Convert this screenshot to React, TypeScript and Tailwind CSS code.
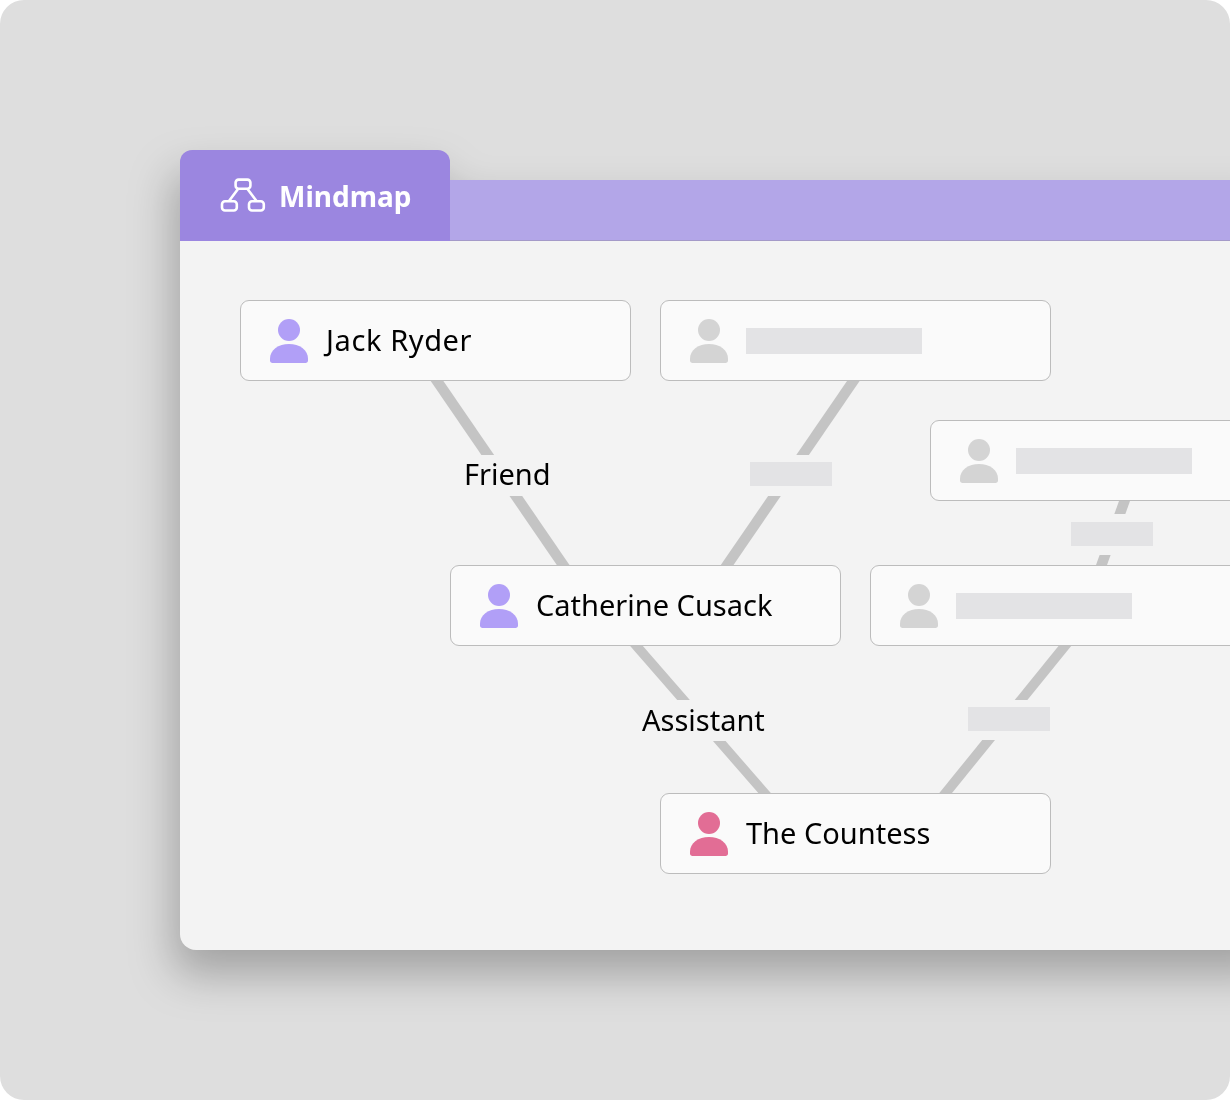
import React from 'react';

const Avatar = ({ className }: { className: string }) => (
  <svg viewBox="0 0 38 44" className={`w-[38px] h-[44px] shrink-0 ${className}`} fill="currentColor">
    <circle cx="19" cy="11" r="11" />
    <path d="M0 39.500C0 31 8.500 25 19 25C29.500 25 38 31 38 39.500V41.500C38 43 37 44 35.500 44H2.500C1 44 0 43 0 41.500Z" />
  </svg>
);

const Node = ({ pos, label, avatar, labelClass = '' }: { pos: string; label?: string; avatar: string; labelClass?: string }) => (
  <div className={`absolute ${pos} w-[391px] h-[81px] flex items-center gap-[18px] pl-[29px] bg-[#fafafa] border border-[#bcbcbc] rounded-[9px]`}>
    <Avatar className={avatar} />
    {label ? (
      <span className={`text-[29px] leading-none pb-[3px] text-black whitespace-nowrap ${labelClass}`}>{label}</span>
    ) : (
      <div className="w-[176px] h-[26px] bg-[#e3e3e5]" />
    )}
  </div>
);

const Tag = ({ pos }: { pos: string }) => (
  <div className={`absolute ${pos} w-[82px] h-[24px] bg-[#e3e3e5]`} />
);

const Relation = ({ pos, label }: { pos: string; label: string }) => (
  <span className={`absolute ${pos} text-[29px] leading-none text-black whitespace-nowrap`}>{label}</span>
);

export default function App() {
  return (
    <div className="w-[1230px] h-[1100px] overflow-hidden bg-white font-['Noto_Sans','Open_Sans',sans-serif]">
      <div className="w-full h-full overflow-hidden rounded-[24px] bg-[#dedede] pl-[180px] pt-[150px]">
        <div className="w-[1100px] drop-shadow-[-6px_24px_22px_rgba(0,0,0,0.27)]">
          <div className="flex items-end h-[91px]">
            <div className="w-[270px] h-[91px] flex items-center gap-[13px] pl-[40px] pb-[1px] bg-[#9b86e0] rounded-t-[12px]">
              <svg viewBox="220 177 46 36" className="w-[46px] h-[36px]" fill="none" stroke="white" strokeWidth="2.600">
                <rect x="235.600" y="179.600" width="14.800" height="9.200" rx="3" />
                <rect x="222" y="201.300" width="14.800" height="9.200" rx="3" />
                <rect x="249" y="201.300" width="14.800" height="9.200" rx="3" />
                <path d="M238 189 L229 201 M247.500 189 L256.500 201" />
              </svg>
              <span className="text-[28px] font-bold leading-none mt-[2px] text-white">Mindmap</span>
            </div>
            <div className="flex-1 h-[61px] bg-[#b3a6e8] border-b border-[#a49ac8]" />
          </div>
          <div className="relative h-[709px] bg-[#f3f3f3] rounded-bl-[16px]">
            {/* canvas coords: page minus (180, 241) */}
            <svg className="absolute left-0 top-0 w-[1050px] h-[709px]" viewBox="180 241 1050 709" fill="#c4c4c4">
              <polygon points="430,380 442.700,380 569.500,565 556.800,565" />
              <polygon points="847.700,380 860.300,380 733.500,565 720.800,565" />
              <polygon points="1119,501 1130,501 1107,565 1096,565" />
              <polygon points="629.300,645 642,645 770.800,793 758.300,793" />
              <polygon points="1059.300,645 1072,645 952,793 939.300,793" />
            </svg>
            <div className="absolute left-[270px] top-[214px] w-[100px] h-[41px] bg-[#f3f3f3]" />
            <div className="absolute left-[560px] top-[214px] w-[100px] h-[41px] bg-[#f3f3f3]" />
            <div className="absolute left-[880px] top-[273px] w-[100px] h-[41px] bg-[#f3f3f3]" />
            <div className="absolute left-[450px] top-[459px] w-[140px] h-[41px] bg-[#f3f3f3]" />
            <div className="absolute left-[780px] top-[459px] w-[100px] h-[40px] bg-[#f3f3f3]" />

            <Node pos="left-[60px] top-[59px]" label="Jack Ryder" avatar="text-[#b19ff7]" labelClass="tracking-[0.6px]" />
            <Node pos="left-[480px] top-[59px]" avatar="text-[#d4d4d4]" />
            <Node pos="left-[750px] top-[179px]" avatar="text-[#d4d4d4]" />
            <Node pos="left-[270px] top-[324px]" label="Catherine Cusack" avatar="text-[#b19ff7]" />
            <Node pos="left-[690px] top-[324px]" avatar="text-[#d4d4d4]" />
            <Node pos="left-[480px] top-[552px]" label="The Countess" avatar="text-[#e26d95]" />

            <Relation pos="left-[284px] top-[218px]" label="Friend" />
            <Relation pos="left-[462px] top-[464px]" label="Assistant" />
            <Tag pos="left-[570px] top-[221px]" />
            <Tag pos="left-[891px] top-[281px]" />
            <Tag pos="left-[788px] top-[466px]" />
          </div>
        </div>
      </div>
    </div>
  );
}
